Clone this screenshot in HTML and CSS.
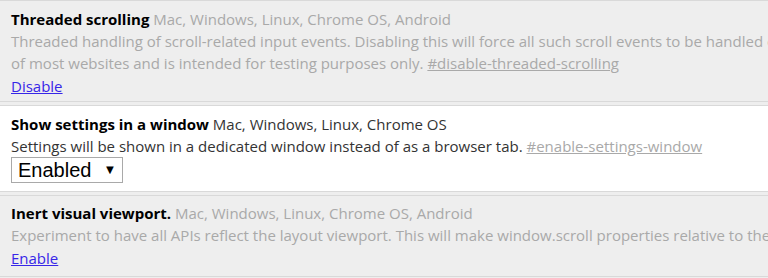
FILE: index.html
```html
<!DOCTYPE html>
<html lang="en">
<head>
    <meta charset="UTF-8">
    <title>Flags</title>
    <link rel="stylesheet" href="styles.css">
</head>
<body>
    <div class="experiment-list">
        <div class="experiment experiment-disabled">
            <div class="experiment-name">
                <span class="name">Threaded scrolling</span>
                <span class="platforms">Mac, Windows, Linux, Chrome OS, Android</span>
            </div>
            <div class="experiment-desc">
                Threaded handling of scroll-related input events. Disabling this will force all such scroll events to be handled on the main thread.<br>
                of most websites and is intended for testing purposes only.
                <a class="permalink" href="#disable-threaded-scrolling">#disable-threaded-scrolling</a>
            </div>
            <div class="experiment-actions">
                <a class="action-link" href="#">Disable</a>
            </div>
        </div>

        <div class="experiment experiment-enabled">
            <div class="experiment-name">
                <span class="name">Show settings in a window</span>
                <span class="platforms">Mac, Windows, Linux, Chrome OS</span>
            </div>
            <div class="experiment-desc">
                Settings will be shown in a dedicated window instead of as a browser tab.
                <a class="permalink" href="#enable-settings-window">#enable-settings-window</a>
            </div>
            <div class="experiment-actions">
                <div class="select-box">Enabled <span class="arrow">&#9660;</span></div>
            </div>
        </div>

        <div class="experiment experiment-disabled">
            <div class="experiment-name">
                <span class="name">Inert visual viewport.</span>
                <span class="platforms">Mac, Windows, Linux, Chrome OS, Android</span>
            </div>
            <div class="experiment-desc">
                Experiment to have all APIs reflect the layout viewport. This will make window.scroll properties relative to the layout viewport.
            </div>
            <div class="experiment-actions">
                <a class="action-link" href="#">Enable</a>
            </div>
        </div>
    </div>
</body>
</html>
```

FILE: styles.css
```css
* {
    margin: 0;
    padding: 0;
    box-sizing: border-box;
}

html,
body {
    width: 768px;
    height: 278px;
    overflow: hidden;
}

body {
    font-family: 'Open Sans', 'Noto Sans', sans-serif;
    font-size: 15px;
    line-height: 22px;
    background: #eeeeee;
    color: #333;
}

.experiment-list {
    width: 1100px;
    display: flex;
    flex-direction: column;
    gap: 3px;
}

.experiment {
    border: 1px solid #d9d9d9;
    border-left: none;
    padding: 7px 0 4px 11px;
}

.experiment:last-child {
    padding-top: 6px;
    padding-bottom: 7px;
}

.experiment-disabled {
    background: #eeeeee;
    color: #a9a9a9;
}

.experiment-enabled {
    background: #ffffff;
    padding-bottom: 8px;
}

.experiment-name,
.experiment-desc {
    white-space: nowrap;
}

.name {
    font-weight: 700;
    color: #000;
}

.experiment-disabled .platforms {
    color: #a9a9a9;
}

.experiment-enabled .platforms {
    color: #333;
}

.permalink {
    color: #a9a9a9;
    text-decoration: underline;
}

.experiment-actions {
    margin-top: 1px;
}

.experiment-enabled .experiment-actions {
    margin-top: 0;
}

.action-link {
    color: #3726e8;
    text-decoration: underline;
}

.select-box {
    display: inline-flex;
    align-items: center;
    height: 26px;
    width: 112px;
    padding: 0 8px 0 6px;
    border: 1px solid #a9a9a9;
    background: #fff;
    color: #000;
    font-family: 'Liberation Sans', Arial, sans-serif;
    font-size: 20px;
}

.arrow {
    font-size: 13px;
    margin-left: 12px;
}
```
